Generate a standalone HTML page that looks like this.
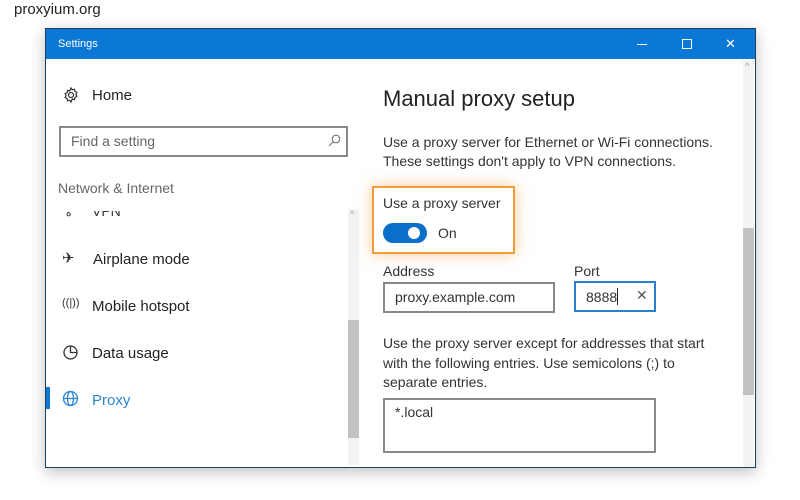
<!DOCTYPE html>
<html><head><meta charset="utf-8"><style>
*{margin:0;padding:0;box-sizing:border-box}
body{width:800px;height:500px;background:#fff;font-family:"Liberation Sans",sans-serif;color:#222;position:relative;overflow:hidden}
.a{position:absolute;white-space:nowrap}
.win{position:absolute;left:45px;top:28px;width:711px;height:440px;border:1px solid #1f3f5f;background:#fff;box-shadow:0 4px 14px rgba(0,0,0,.25)}
.tb{position:absolute;left:0;top:0;width:100%;height:30px;background:#0a78d4;color:#fff}
.box{position:absolute;border:2px solid #888;background:#fff}
</style></head><body>
<div class="a" style="left:14px;top:1px;font-size:15px;color:#222">proxyium.org</div>
<div class="win">
 <div class="tb">
  <div class="a" style="left:12px;top:9px;font-size:11px">Settings</div>
  <div class="a" style="left:591px;top:15px;width:10px;height:1px;background:#fff"></div>
  <div class="a" style="left:636px;top:10px;width:10px;height:10px;border:1px solid #fff"></div>
  <div class="a" style="left:679px;top:7px;font-size:13px">✕</div>
 </div>
 <!-- left -->
 <svg class="a" style="left:16px;top:57px" width="18" height="18" viewBox="0 0 18 18" fill="none" stroke="#333" stroke-width="1.2"><circle cx="9" cy="9" r="2.5"/><path d="M9 2l1.3 1.8 2.2-.6.4 2.2 2 1-1 2 1 2-2 1-.4 2.2-2.2-.6L9 16l-1.3-1.8-2.2.6-.4-2.2-2-1 1-2-1-2 2-1 .4-2.2 2.2.6z"/></svg>
 <div class="a" style="left:46px;top:58px;font-size:15px">Home</div>
 <div class="box" style="left:13px;top:97px;width:289px;height:31px"></div>
 <div class="a" style="left:25px;top:104px;font-size:14px;color:#666">Find a setting</div>
 <svg class="a" style="left:282px;top:105px" width="13" height="13" viewBox="0 0 13 13" fill="none" stroke="#777" stroke-width="1.1"><circle cx="8" cy="5" r="3.8"/><path d="M5.3 7.7L1 12"/></svg>
 <div class="a" style="left:16px;top:177px;font-size:11px;color:#333">"ه"</div>
 <div class="a" style="left:46px;top:174px;font-size:14px;color:#333">VPN</div>
 <div class="a" style="left:0;top:168px;width:300px;height:14px;background:#fff"></div>
 <div class="a" style="left:12px;top:151px;font-size:14px;color:#666">Network &amp; Internet</div>
 <div class="a" style="left:16px;top:220px;font-size:15px;color:#333">✈</div>
 <div class="a" style="left:47px;top:222px;font-size:15px">Airplane mode</div>
 <div class="a" style="left:16px;top:268px;font-size:11px;color:#333">((|))</div>
 <div class="a" style="left:46px;top:269px;font-size:15px">Mobile hotspot</div>
 <svg class="a" style="left:16px;top:315px" width="17" height="17" viewBox="0 0 17 17" fill="none" stroke="#333" stroke-width="1.3"><circle cx="8.5" cy="8.5" r="6.5"/><path d="M8.5 2v6.5h6.5"/></svg>
 <div class="a" style="left:46px;top:316px;font-size:15px">Data usage</div>
 <div class="a" style="left:0;top:358px;width:4px;height:22px;background:#0a78d4"></div>
 <svg class="a" style="left:16px;top:361px" width="17" height="17" viewBox="0 0 17 17" fill="none" stroke="#2a85d0" stroke-width="1.3"><circle cx="8.5" cy="8.5" r="7"/><ellipse cx="8.5" cy="8.5" rx="3" ry="7"/><path d="M1.5 8.5h14"/></svg>
 <div class="a" style="left:46px;top:363px;font-size:15px;color:#2a85d0">Proxy</div>
 <div class="a" style="left:302px;top:180px;width:11px;height:256px;background:#f3f3f3"></div>
 <div class="a" style="left:302px;top:291px;width:11px;height:118px;background:#c2c2c2"></div>
 <div class="a" style="left:304px;top:180px;font-size:9px;color:#999">^</div>
 <!-- right -->
 <div class="a" style="left:337px;top:57px;font-size:22px;color:#222">Manual proxy setup</div>
 <div class="a" style="left:337px;top:104px;font-size:14px;line-height:19px;color:#333">Use a proxy server for Ethernet or Wi-Fi connections.<br>These settings don't apply to VPN connections.</div>
 <div class="a" style="left:326px;top:157px;width:143px;height:68px;border:2px solid #f39a3a;box-shadow:0 0 14px rgba(243,154,58,.5)"></div>
 <div class="a" style="left:337px;top:166px;font-size:14px;color:#333">Use a proxy server</div>
 <div class="a" style="left:337px;top:194px;width:44px;height:20px;border-radius:10px;background:#0a6fc9"></div>
 <div class="a" style="left:362px;top:198px;width:12px;height:12px;border-radius:50%;background:#fff"></div>
 <div class="a" style="left:392px;top:196px;font-size:14px;color:#333">On</div>
 <div class="a" style="left:337px;top:234px;font-size:14px;color:#333">Address</div>
 <div class="box" style="left:337px;top:253px;width:172px;height:31px"></div>
 <div class="a" style="left:349px;top:260px;font-size:14px;color:#333">proxy.example.com</div>
 <div class="a" style="left:528px;top:234px;font-size:14px;color:#333">Port</div>
 <div class="box" style="left:528px;top:252px;width:82px;height:31px;border-color:#2a7fd0"></div>
 <div class="a" style="left:540px;top:260px;font-size:14px;color:#333">8888</div>
 <div class="a" style="left:571px;top:259px;width:1px;height:17px;background:#222"></div>
 <div class="a" style="left:590px;top:258px;font-size:14px;color:#555">✕</div>
 <div class="a" style="left:337px;top:305px;font-size:14px;line-height:19.5px;color:#333">Use the proxy server except for addresses that start<br>with the following entries. Use semicolons (;) to<br>separate entries.</div>
 <div class="box" style="left:337px;top:369px;width:273px;height:55px"></div>
 <div class="a" style="left:349px;top:375px;font-size:14px;color:#333">*.local</div>
 <div class="a" style="left:697px;top:32px;width:11px;height:406px;background:#f3f3f3"></div>
 <div class="a" style="left:697px;top:199px;width:11px;height:167px;background:#c2c2c2"></div>
 <div class="a" style="left:699px;top:32px;font-size:9px;color:#999">^</div>
</div>
</body></html>
